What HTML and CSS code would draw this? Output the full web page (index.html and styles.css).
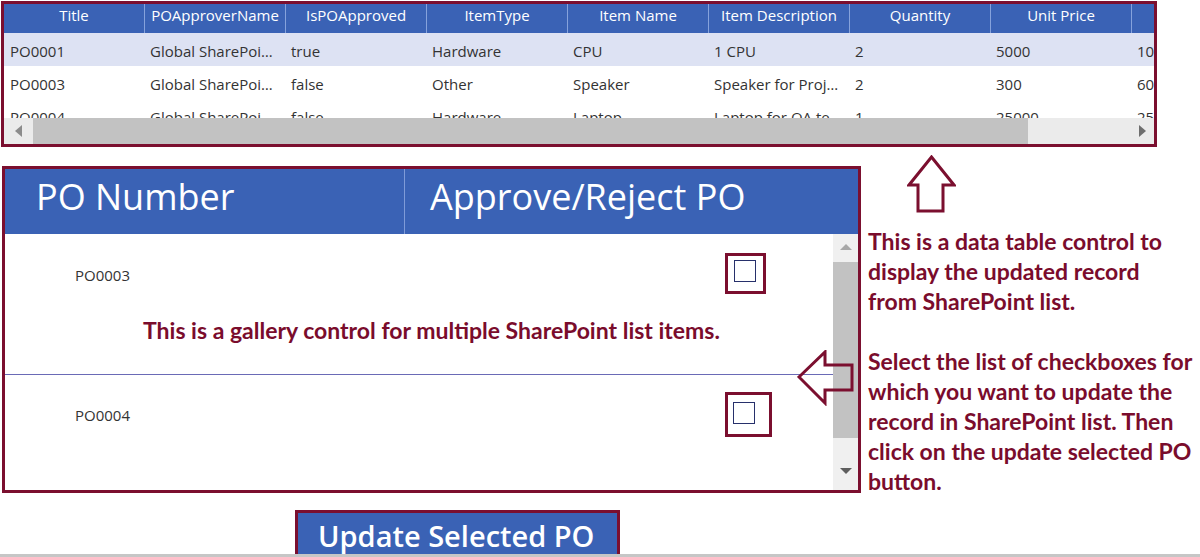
FILE: index.html
```html
<!DOCTYPE html>
<html lang="en">
<head>
<meta charset="UTF-8">
<title>PO Approval</title>
<meta name="viewport" content="width=device-width, initial-scale=1">
<link rel="stylesheet" href="styles.css">
</head>
<body>

<!-- data table with the updated records -->
<div class="datatable">
<div class="dt-grid">
<div class="dt-row dt-head">
<div>Title</div><div>POApproverName</div><div>IsPOApproved</div><div>ItemType</div><div>Item Name</div><div>Item Description</div><div>Quantity</div><div>Unit Price</div><div>Total Price</div>
</div>
<div class="dt-row sel">
<div>PO0001</div><div>Global SharePoi…</div><div>true</div><div>Hardware</div><div>CPU</div><div>1 CPU</div><div>2</div><div>5000</div><div>10000</div>
</div>
<div class="dt-row">
<div>PO0003</div><div>Global SharePoi…</div><div>false</div><div>Other</div><div>Speaker</div><div>Speaker for Proj…</div><div>2</div><div>300</div><div>600</div>
</div>
<div class="dt-row">
<div>PO0004</div><div>Global SharePoi…</div><div>false</div><div>Hardware</div><div>Laptop</div><div>Laptop for QA te…</div><div>1</div><div>25000</div><div>25000</div>
</div>
</div>
<div class="hscroll">
<div class="hs-btn"><span class="tri-left"></span></div>
<div class="hs-thumb"></div>
<div class="hs-track"></div>
<div class="hs-btn end"><span class="tri-right"></span></div>
</div>
</div>

<div class="main">

<!-- gallery -->
<div class="gallery">
<div class="g-head">
<div class="g-col1">PO Number</div>
<div class="g-col2">Approve/Reject PO</div>
</div>
<div class="g-body">
<div class="g-rows">
<div class="g-row">
<div class="g-label">PO0003</div>
<div class="hl"><div class="chk"></div></div>
</div>
<div class="g-row second">
<div class="g-label">PO0004</div>
<div class="hl wide"><div class="chk"></div></div>
</div>
</div>
<div class="vscroll">
<div class="vs-btn"><span class="tri-up"></span></div>
<div class="vs-thumb"></div>
<div class="vs-rest"><span class="tri-down"></span></div>
</div>
</div>

<div class="g-note">This is a gallery control for multiple SharePoint list items.</div>

<svg class="arrow-left" width="58" height="56" viewBox="0 0 58 56">
<path d="M2 27 L28 2 L28 15 L55 15 L55 40 L28 40 L28 53 Z" fill="none" stroke="#7b0f2f" stroke-width="3" stroke-linejoin="miter"/>
</svg>
</div>

<!-- notes -->
<div class="notes">
<svg class="arrow-up" width="49" height="58" viewBox="0 0 49 58">
<path d="M24.5 2 L47 30 L36 30 L36 56 L11 56 L11 30 L2 30 Z" fill="none" stroke="#7b0f2f" stroke-width="3"/>
</svg>
<p>This is a data table control to<br>display the updated record<br>from SharePoint list.</p>
<p>Select the list of checkboxes for<br>which you want to update the<br>record in SharePoint list. Then<br>click on the update selected PO<br>button.</p>
</div>

</div>

<div class="btn">Update Selected PO</div>

<div class="bottom-bar"></div>

</body>
</html>
```

FILE: styles.css
```css
body{
margin:0;
background:#fff;
font-family:"Open Sans", Arial, sans-serif;
color:#333;
height:557px;
overflow:hidden;
}

/* data table */
.datatable{
margin:1px 0 0 1px;
width:1150px;
border:3px solid #7b0f2f;
background:#fff;
}

.dt-grid{
height:114px;
overflow:hidden;
}

.dt-row{
display:grid;
grid-template-columns:140px repeat(8,141px);
height:33px;
box-sizing:border-box;
padding-top:4px;
line-height:29px;
font-size:15px;
white-space:nowrap;
}

.dt-row div{
padding-left:6px;
overflow:hidden;
}

.dt-row.sel{background:#dde2f3}

.dt-head{
background:#3a62b5;
color:#fff;
height:29px;
padding-top:0;
line-height:23px;
}

.dt-head div{
padding-left:0;
text-align:center;
border-left:1px solid #86a2dc;
}

.dt-head div:first-child{border-left:none}

.hscroll{
display:flex;
height:26px;
background:#ebebeb;
}

.hs-btn{
width:29px;
display:flex;
align-items:center;
justify-content:center;
}

.hs-btn.end{width:24px}

.hs-thumb{
width:995px;
background:#c2c2c2;
}

.hs-track{flex:1}

.tri-left{
border-right:7px solid #8c8c8c;
border-top:6px solid transparent;
border-bottom:6px solid transparent;
}

.tri-right{
border-left:7px solid #6e6e6e;
border-top:6px solid transparent;
border-bottom:6px solid transparent;
}

/* gallery + notes */
.main{
display:flex;
align-items:flex-start;
}

.gallery{
position:relative;
margin:19px 0 0 2px;
width:853px;
border:3px solid #7b0f2f;
}

.g-head{
display:flex;
height:65px;
background:#3a62b5;
color:#fff;
font-size:36px;
line-height:55px;
}

.g-col1{
width:368px;
padding-left:31px;
border-right:1px solid #7f9bd8;
}

.g-col2{padding-left:25px}

.g-body{
display:flex;
height:256px;
}

.g-rows{
width:828px;
overflow:hidden;
}

.g-row{
display:flex;
align-items:flex-start;
height:141px;
box-sizing:border-box;
border-bottom:1px solid #6a6ab6;
}

.g-label{
width:650px;
padding-left:70px;
margin-top:31px;
font-size:15px;
line-height:20px;
}

.g-row.second .g-label{margin-top:30px}

.hl{
margin-top:19px;
border:3px solid #7b0f2f;
padding:4px 7px 9px 6px;
}

.hl.wide{
margin-top:17px;
padding:7px 14px 10px 5px;
}

.chk{
width:20px;
height:20px;
border:1.5px solid #27306b;
background:#fff;
}

.vscroll{
width:25px;
background:#f0f0f0;
display:flex;
flex-direction:column;
}

.vs-btn{
height:28px;
display:flex;
align-items:center;
justify-content:center;
padding-bottom:2px;
box-sizing:border-box;
}

.vs-thumb{
height:176px;
background:#c2c2c2;
}

.vs-rest{
flex:1;
display:flex;
align-items:flex-end;
justify-content:center;
padding-bottom:16px;
}

.tri-up{
border-bottom:6px solid #a8a8a8;
border-left:6px solid transparent;
border-right:6px solid transparent;
}

.tri-down{
border-top:6px solid #5e5e5e;
border-left:6px solid transparent;
border-right:6px solid transparent;
}

.g-note{
position:absolute;
left:138px;
top:146px;
font-family:Lato, "Liberation Sans", sans-serif;
font-weight:bold;
font-size:23px;
line-height:30px;
color:#7a0c2c;
white-space:nowrap;
}

.arrow-left{
position:absolute;
left:792px;
top:181px;
}

.notes{
margin-left:7px;
font-family:Lato, "Liberation Sans", sans-serif;
font-weight:bold;
font-size:23px;
line-height:30px;
color:#7a0c2c;
white-space:nowrap;
}

.arrow-up{
display:block;
margin:8px 0 0 39px;
}

.notes p{margin:13px 0 30px 0}
.notes p + p{margin:0}

/* button */
.btn{
margin:14px 0 0 295px;
width:299px;
height:60px;
padding:3px 0 0 20px;
background:#3a62b5;
border:3px solid #7b0f2f;
color:#fff;
font-size:29px;
font-weight:600;
}

.bottom-bar{
position:fixed;
left:0;
right:0;
bottom:0;
height:3px;
background:#c6c6c6;
}
```
